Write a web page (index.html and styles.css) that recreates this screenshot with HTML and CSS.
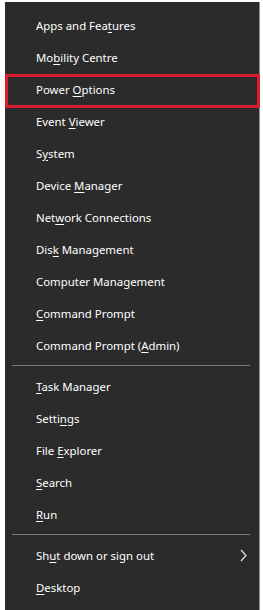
FILE: index.html
```html
<!DOCTYPE html>
<html lang="en">
<head>
<meta charset="utf-8">
<title>Quick Link Menu</title>
<link rel="stylesheet" href="styles.css">
</head>
<body>
<nav class="menu">
  <ul class="group">
    <li class="item"><span class="label">Apps and Fea<u>t</u>ures</span></li>
    <li class="item"><span class="label">Mo<u>b</u>ility Centre</span></li>
    <li class="item marked"><span class="label">Power <u>O</u>ptions</span></li>
    <li class="item"><span class="label">Event <u>V</u>iewer</span></li>
    <li class="item"><span class="label">S<u>y</u>stem</span></li>
    <li class="item"><span class="label">Device <u>M</u>anager</span></li>
    <li class="item"><span class="label">Net<u>w</u>ork Connections</span></li>
    <li class="item"><span class="label">Dis<u>k</u> Management</span></li>
    <li class="item"><span class="label">Computer Mana<u>g</u>ement</span></li>
    <li class="item"><span class="label"><u>C</u>ommand Prompt</span></li>
    <li class="item"><span class="label">Command Prompt (<u>A</u>dmin)</span></li>
  </ul>
  <hr class="sep">
  <ul class="group">
    <li class="item"><span class="label"><u>T</u>ask Manager</span></li>
    <li class="item"><span class="label">Setti<u>n</u>gs</span></li>
    <li class="item"><span class="label">File <u>E</u>xplorer</span></li>
    <li class="item"><span class="label"><u>S</u>earch</span></li>
    <li class="item"><span class="label"><u>R</u>un</span></li>
  </ul>
  <hr class="sep">
  <ul class="group">
    <li class="item"><span class="label">Sh<u>u</u>t down or sign out</span>
      <svg class="chev" width="7" height="13" viewBox="0 0 7 13" aria-hidden="true"><path d="M1 1 L6 6.5 L1 12" fill="none" stroke="#e6e6e6" stroke-width="1.2"/></svg>
    </li>
    <li class="item"><span class="label"><u>D</u>esktop</span></li>
  </ul>
</nav>
</body>
</html>
```
FILE: styles.css
```css
html, body {
  margin: 0;
  padding: 0;
  background: #ffffff;
}
body {
  padding: 2px 0 0 5px;
  height: 608px;
  overflow: hidden;
}
.menu {
  width: 254px;
  height: 620px;
  background: #2b2b2b;
  border-right: 1px solid #8f8f8f;
  padding-top: 7px;
  box-sizing: content-box;
  font-family: "Noto Sans", "Open Sans", sans-serif;
  font-size: 11.4px;
  color: #ffffff;
}
.group {
  list-style: none;
  margin: 0;
  padding: 0;
}
.item {
  position: relative;
  display: flex;
  align-items: center;
  justify-content: space-between;
  height: 32px;
  padding: 0 12px 0 31px;
}
.label {
  white-space: nowrap;
}
.item u {
  text-decoration-thickness: 1px;
  text-underline-offset: 2px;
}
.item.marked::after {
  content: "";
  position: absolute;
  left: 0;
  right: -1px;
  top: 1px;
  bottom: -3px;
  border: 3px solid #d91c30;
  pointer-events: none;
}
.sep {
  margin: 4px 9px 4px 7px;
  border: 0;
  height: 1px;
  background: #7a7a7a;
}
.chev {
  display: block;
}
```
